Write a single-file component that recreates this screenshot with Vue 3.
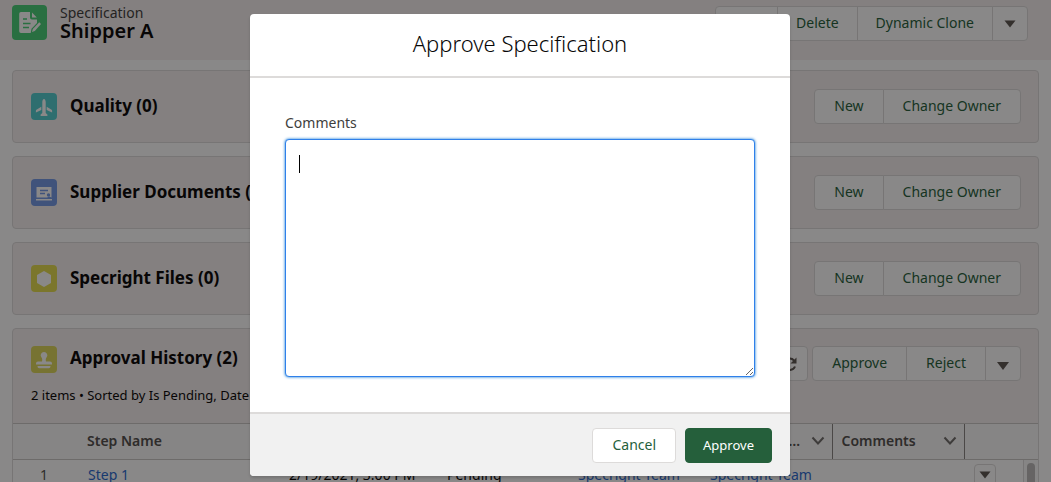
<script setup>
import { ref } from 'vue'

const comments = ref('')

const relatedLists = [
  { title: 'Quality (0)', icon: 'plane' },
  { title: 'Supplier Documents (0)', icon: 'certificate' },
  { title: 'Specright Files (0)', icon: 'hexagon' },
]

const columns = ['Step Name', 'Date', 'Status', 'Assigned To', 'Actual Approver', 'Comments']

const rows = [
  { step: 'Step 1', date: '2/19/2021, 3:00 PM', status: 'Pending', assigned: 'Specright Team', approver: 'Specright Team' },
]
</script>

<template>
  <div class="app">
    <main class="page">
      <header class="page-header">
        <span class="entity-icon large green">
          <svg viewBox="0 0 35 35" aria-hidden="true">
            <path fill="#fff" d="M9 7h9v5.500a2 2 0 0 0 2 2h5V18l-5.500 5.800-.8 4.200H9a1.800 1.800 0 0 1-1.800-1.800V8.800A1.800 1.800 0 0 1 9 7zM20 7.500l4.800 5H20z" />
            <path class="cut" d="M11 14h4M11 18.500h7.500M11 22.500h6" />
            <path fill="#fff" d="M27.300 17.300l1.700 1.700-6.200 7-2.800 1 .8-3z" />
          </svg>
        </span>
        <div class="heading">
          <p class="entity">Specification</p>
          <h1>Shipper A</h1>
        </div>
        <div class="group">
          <button type="button">Edit</button>
          <button type="button">Delete</button>
          <button type="button">Dynamic Clone</button>
          <button type="button" class="more" aria-label="More actions">
            <svg width="12" height="8" viewBox="0 0 12 8"><path d="M.5.500h11L6 7.500z" /></svg>
          </button>
        </div>
      </header>

      <div class="lists">
        <section v-for="list in relatedLists" :key="list.title" class="card">
          <div class="card-header">
            <span class="entity-icon" :class="list.icon">
              <svg v-if="list.icon === 'plane'" viewBox="0 0 26 26" aria-hidden="true">
                <path fill="#fff" d="M13 5c1 0 1.700 1.500 1.700 3.200V19l1.700 1.400V22H9.600v-1.600l1.700-1.400V8.200C11.300 6.500 12 5 13 5zM15.700 12.800l4.900 3c.4.300.5.700.5 1.200v1.500L15.700 16zM10.300 12.800V16l-5.400 2.500V17c0-.5.100-.9.500-1.200z" />
              </svg>
              <svg v-else-if="list.icon === 'certificate'" viewBox="0 0 26 26" aria-hidden="true">
                <path fill="#fff" d="M5.500 7h15v10.500l-2.200-1-2.300 1H5.500zM5 19h16v1.500H5z" />
                <path class="cut" d="M9 10.500h8M9 13.500h5" />
                <circle class="seal" cx="17.500" cy="15" r="1.700" />
              </svg>
              <svg v-else viewBox="0 0 26 26" aria-hidden="true">
                <path fill="#fff" d="M13 5l7 4v8l-7 4-7-4V9z" />
              </svg>
            </span>
            <h2>{{ list.title }}</h2>
            <div class="group">
              <button type="button">New</button>
              <button type="button">Change Owner</button>
            </div>
          </div>
        </section>

        <section class="card history">
          <div class="card-header">
            <span class="entity-icon stamp">
              <svg viewBox="0 0 26 26" aria-hidden="true">
                <path fill="#fff" d="M13 5a3.300 3.300 0 0 1 2.500 5.500c-.8 1-.9 2.500-.5 4h4a2 2 0 0 1 2 2v1H5v-1a2 2 0 0 1 2-2h4c.4-1.500.3-3-.5-4A3.300 3.300 0 0 1 13 5zM6.500 19h13c0 1.500-.7 2.200-1.800 2.200H8.300c-1.100 0-1.800-.7-1.800-2.200z" />
              </svg>
            </span>
            <h2>Approval History (2)</h2>
            <button type="button" class="refresh" aria-label="Refresh">
              <svg width="14" height="14" viewBox="0 0 14 14">
                <path fill="none" stroke="currentColor" stroke-width="2" d="M1.500 5.500A5.500 5.500 0 0 1 11 3.500l1 1M12 9.500A5.500 5.500 0 0 1 2 10" />
                <path d="M13.500.5v6h-6z" />
              </svg>
            </button>
            <div class="group">
              <button type="button">Approve</button>
              <button type="button">Reject</button>
              <button type="button" class="more low" aria-label="More actions">
                <svg width="12" height="8" viewBox="0 0 12 8"><path d="M0 0h12L6 8z" /></svg>
              </button>
            </div>
          </div>
          <p class="summary">2 items • Sorted by Is Pending, Date</p>
          <div class="table-wrap">
            <table>
              <colgroup>
                <col class="c-num"><col><col class="c-date"><col class="c-status">
                <col class="c-who"><col class="c-who"><col class="c-who"><col class="c-act">
              </colgroup>
              <thead>
                <tr>
                  <th></th>
                  <th v-for="(name, i) in columns" :key="name" :class="{ divided: i > 3 }">
                    <div class="th">
                      <span>{{ name }}</span>
                      <svg v-if="i > 0" width="14" height="10" viewBox="0 0 14 10"><path d="M1.500 1.500L7 7.500l5.500-6" /></svg>
                    </div>
                  </th>
                  <th></th>
                </tr>
              </thead>
              <tbody>
                <tr v-for="(row, i) in rows" :key="row.step">
                  <td class="num">{{ i + 1 }}</td>
                  <td><a href="#">{{ row.step }}</a></td>
                  <td>{{ row.date }}</td>
                  <td>{{ row.status }}</td>
                  <td><a href="#">{{ row.assigned }}</a></td>
                  <td><a href="#">{{ row.approver }}</a></td>
                  <td></td>
                  <td>
                    <button type="button" class="row-menu" aria-label="Row actions">
                      <svg width="12" height="8" viewBox="0 0 12 8"><path d="M.5.500h11L6 7.500z" /></svg>
                    </button>
                  </td>
                </tr>
              </tbody>
            </table>
            <span class="scroll-track"><span class="scroll-thumb"></span></span>
          </div>
        </section>
      </div>
    </main>

    <div class="backdrop">
      <form class="modal" role="dialog" aria-modal="true" aria-labelledby="modal-title" @submit.prevent>
        <header class="modal-header"><h2 id="modal-title">Approve Specification</h2></header>
        <div class="modal-body">
          <label for="comments">Comments</label>
          <div class="field">
            <textarea id="comments" v-model="comments"></textarea>
            <span class="caret"></span>
          </div>
        </div>
        <footer class="modal-footer">
          <button type="button">Cancel</button>
          <button type="submit" class="brand">Approve</button>
        </footer>
      </form>
    </div>
  </div>
</template>

<style>
html, body { overflow: hidden; }
</style>

<style scoped>
.app {
  position: relative;
  height: 100vh;
  overflow: hidden;
  background: #fff;
  color: #080707;
  font-family: "Noto Sans", "Open Sans", sans-serif;
  font-size: 14px;
  line-height: 20px;
}
h1, h2, p { margin: 0; }
button {
  box-sizing: border-box;
  height: 35px;
  padding: 0 19px 2px;
  border: 1px solid #dddbda;
  border-radius: 4px;
  background: #fff;
  color: #255f3b;
  font: inherit;
  white-space: nowrap;
}
a { color: #2a6ad0; text-decoration: none; }
svg { display: block; }

.page-header {
  display: flex;
  align-items: flex-start;
  box-sizing: border-box;
  height: 60px;
  padding: 5px 23px 0 12px;
  background: #f5f0f0;
}
.heading { flex: 1; padding-left: 13px; }
.entity { line-height: 16px; color: #3e3e3c; }
h1 { font-size: 20px; line-height: 20px; font-weight: 600; }
.page-header .group { margin-top: 1px; }
.page-header button { padding: 0 18px 2px; }
.group { display: flex; }
.group button { border-radius: 0; }
.group button + button { margin-left: -1px; }
.group button:first-child { border-radius: 4px 0 0 4px; }
.group button:last-child { border-radius: 0 4px 4px 0; }
.group .more { width: 36px; padding: 0 11px; }
.more svg, .row-menu svg { fill: #5c5652; }
.low svg { margin-top: 4px; }

.entity-icon {
  flex: none;
  width: 26px;
  height: 27px;
  display: flex;
  align-items: center;
  justify-content: center;
  border-radius: 4px;
}
.entity-icon svg { width: 26px; height: 26px; }
.entity-icon.large { width: 35px; height: 35px; }
.entity-icon.large svg { width: 35px; height: 35px; }
.green { background: #47cf77; color: #47cf77; }
.plane { background: #52cdd0; }
.certificate { background: #7399e6; color: #7399e6; }
.hexagon { background: #e4dd50; }
.stamp { background: #ddd75a; }
.cut { fill: none; stroke: currentColor; stroke-width: 1.5; }
.seal { fill: currentColor; }

.lists {
  display: flex;
  flex-direction: column;
  gap: 13px;
  padding: 10px 12px 0;
}
.card {
  border: 1px solid #dddbda;
  border-radius: 4px;
  background: #f5f0f0;
}
.card-header {
  display: flex;
  align-items: center;
  padding: 18px 17px 18px 18px;
}
h2 {
  flex: 1;
  padding: 0 0 2px 13px;
  font-size: 17px;
  line-height: 24px;
  font-weight: 700;
  white-space: nowrap;
}
.history .card-header { align-items: flex-start; padding: 17px 17px 0 18px; }
.refresh { width: 36px; padding: 0 10px; margin-right: 4px; color: #5c5652; }
.refresh svg { fill: currentColor; }
.summary { padding: 4px 18px 17px; font-size: 13px; line-height: 21px; }

.table-wrap { position: relative; background: #fff; border-top: 1px solid #c9c7c5; }
table { width: 100%; table-layout: fixed; border-collapse: collapse; }
.c-num { width: 65px; }
.c-date { width: 158px; }
.c-status { width: 131px; }
.c-who { width: 132px; }
.c-act { width: 74px; }
th {
  height: 33px;
  padding: 0 7px 2px 9px;
  border-bottom: 1px solid #c9c7c5;
  background: #faf9f9;
  color: #514f4d;
  font-weight: 600;
  text-align: left;
}
th.divided { border-right: 1px solid #888583; }
.th { display: flex; align-items: center; gap: 2px; }
.th span { flex: 1; overflow: hidden; text-overflow: ellipsis; white-space: nowrap; }
.th svg { flex: none; fill: none; stroke: #706e6b; stroke-width: 2; }
td { height: 30px; padding: 0 10px 1px; white-space: nowrap; }
.num { padding-right: 30px; text-align: right; color: #514f4d; }
.row-menu { display: block; width: 22px; height: 22px; padding: 0 4px; }
.scroll-track {
  position: absolute;
  top: 36px;
  right: 0;
  bottom: 0;
  width: 14px;
  border-left: 1px solid #dddbda;
  background: #faf9f9;
}
.scroll-thumb { display: block; width: 8px; height: 40px; margin: 3px; border-radius: 4px; background: #bcbbba; }

.backdrop {
  position: absolute;
  inset: 0;
  display: flex;
  align-items: flex-start;
  justify-content: center;
  padding: 14px 11px 0 0;
  background: rgba(8, 7, 7, 0.48);
}
.modal {
  width: 540px;
  max-width: 100%;
  border-radius: 4px;
  background: #fff;
  box-shadow: 0 2px 3px rgba(0, 0, 0, 0.16);
}
.modal-header { padding: 14px 16px 18px; border-bottom: 2px solid #dddbda; text-align: center; }
.modal-header h2 { padding: 0; font-size: 22px; line-height: 30px; font-weight: 300; }
.modal-body { padding: 35px; }
label { display: block; color: #3e3e3c; line-height: 20px; }
.field { position: relative; margin-top: 6px; }
textarea {
  display: block;
  box-sizing: border-box;
  width: 100%;
  height: 238px;
  padding: 14px;
  border: 1px solid #2f80ea;
  border-radius: 4px;
  outline: none;
  box-shadow: 0 0 3px #0070d2;
  font: inherit;
  resize: both;
}
.caret { position: absolute; top: 16px; left: 14px; width: 1px; height: 18px; background: #000; }
.modal-footer {
  display: flex;
  justify-content: flex-end;
  gap: 9px;
  padding: 14px 18px 13px;
  border-top: 2px solid #dddbda;
  border-radius: 0 0 4px 4px;
  background: #f1f1f1;
}
.brand { padding: 0 17px 1px; border-color: #255f3b; background: #255f3b; color: #fff; font-size: 13px; }
</style>
